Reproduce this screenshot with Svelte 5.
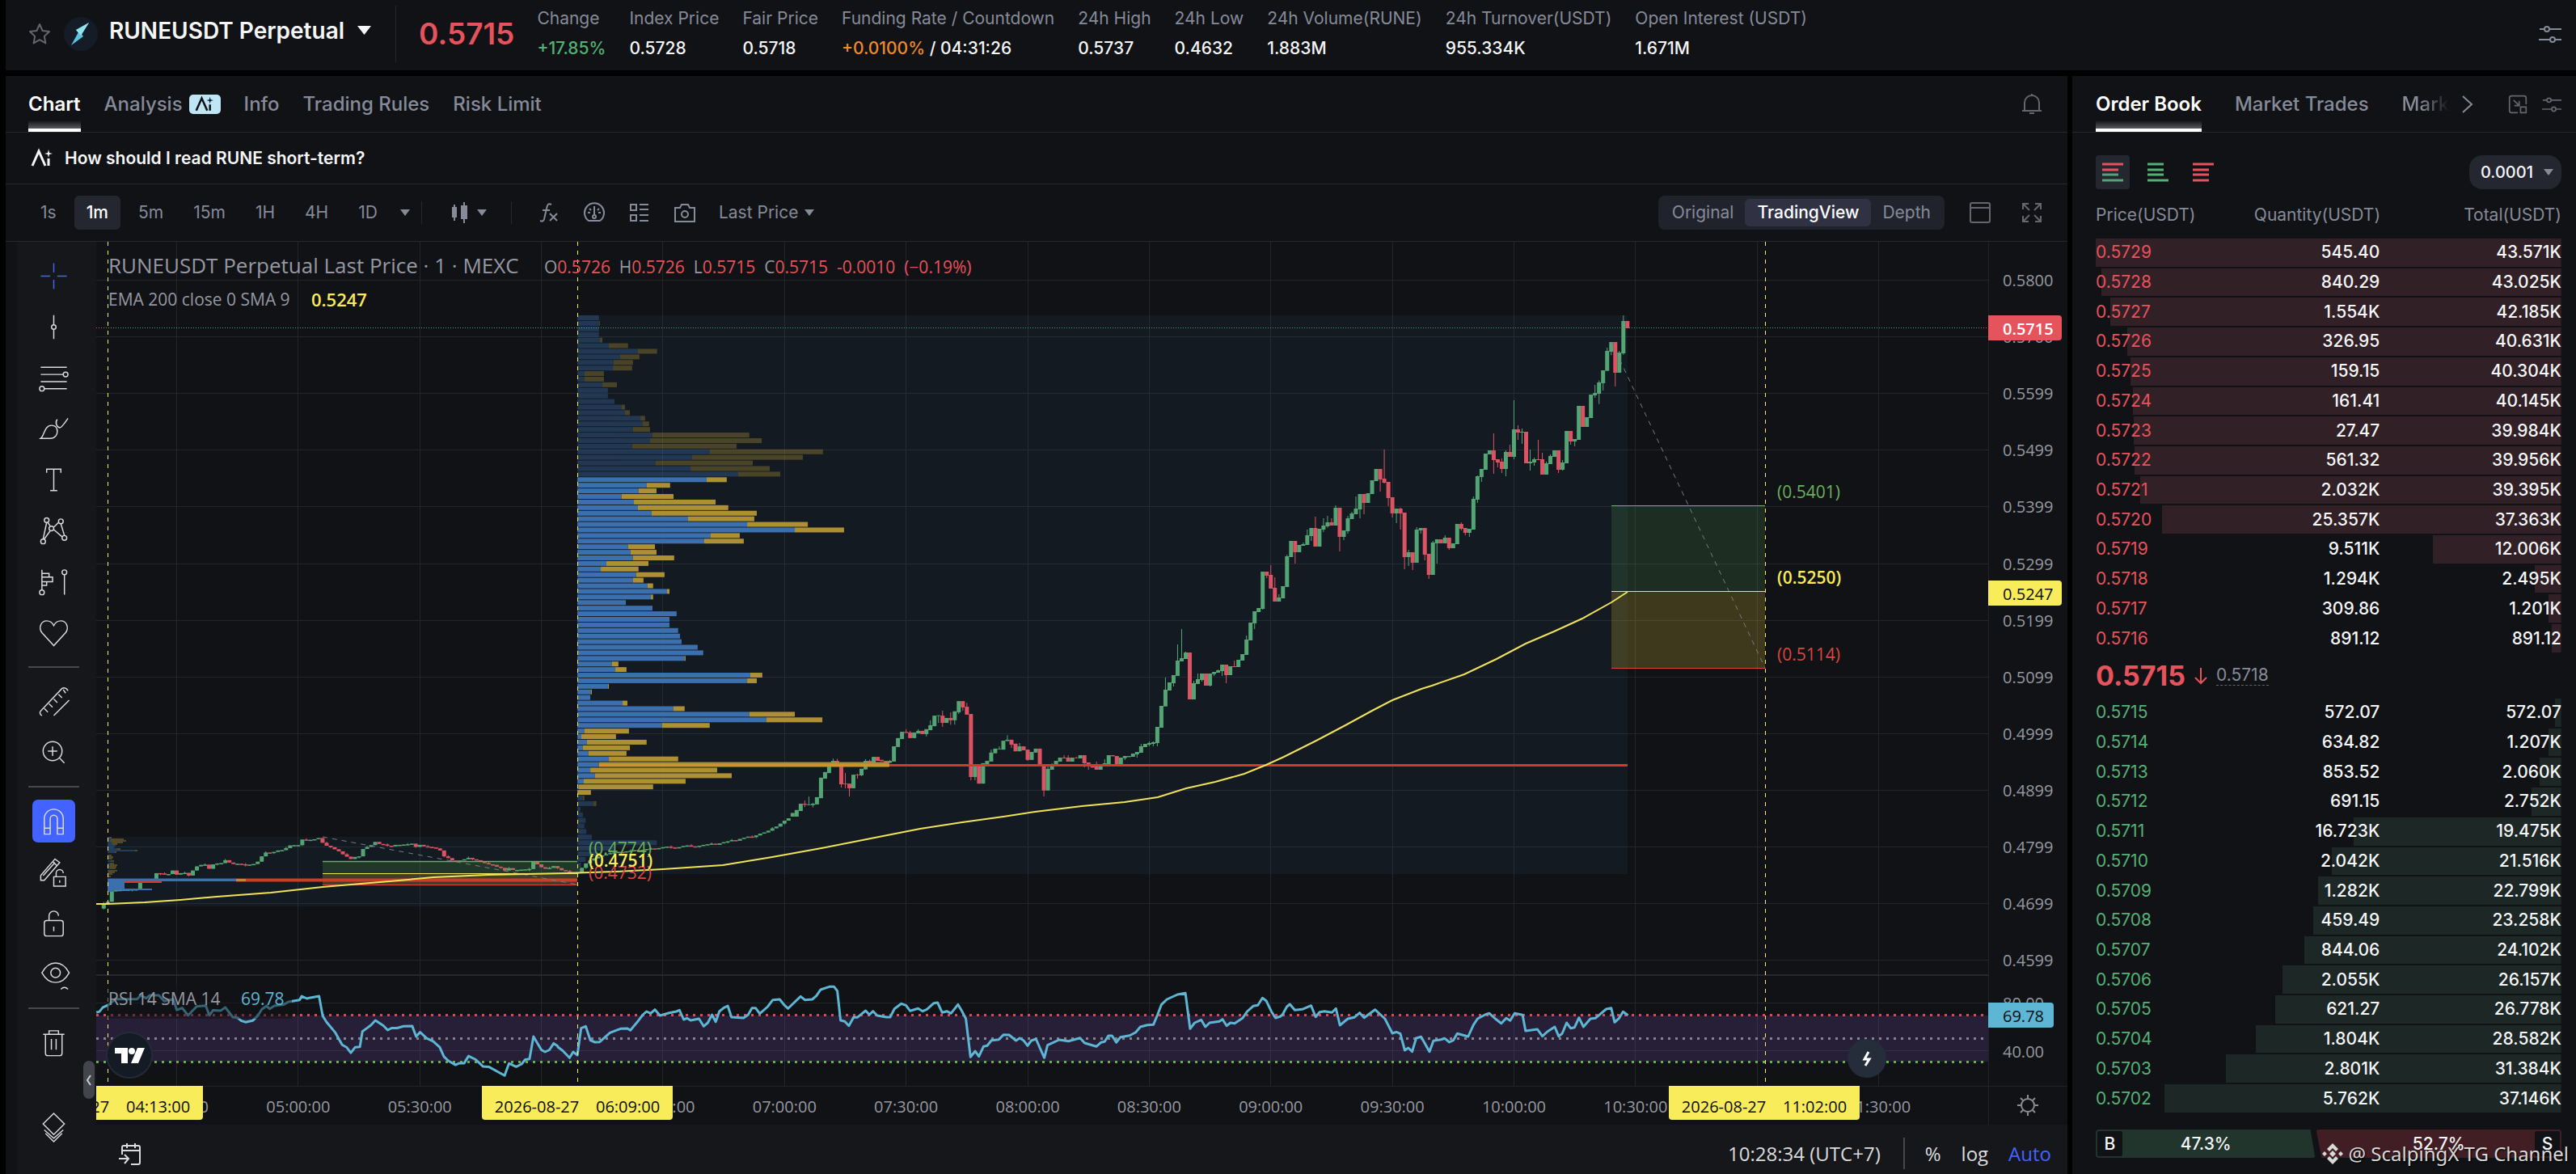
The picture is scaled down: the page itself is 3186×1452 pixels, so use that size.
<script lang="ts">
  type Candle = { x: number; top: number; bottom: number; high: number; low: number; up: boolean };

  const stats = [
    { label: "Change", value: "+17.85%", tone: "up" },
    { label: "Index Price", value: "0.5728", tone: "" },
    { label: "Fair Price", value: "0.5718", tone: "" },
    { label: "Funding Rate / Countdown", value: "+0.0100%", tone: "warn", extra: " / 04:31:26" },
    { label: "24h High", value: "0.5737", tone: "" },
    { label: "24h Low", value: "0.4632", tone: "" },
    { label: "24h Volume(RUNE)", value: "1.883M", tone: "" },
    { label: "24h Turnover(USDT)", value: "955.334K", tone: "" },
    { label: "Open Interest (USDT)", value: "1.671M", tone: "" }
  ];

  const intervals = ["1s", "1m", "5m", "15m", "1H", "4H", "1D"];
  const views = ["Original", "TradingView", "Depth"];
  let activeInterval = $state("1m");
  let activeView = $state("TradingView");
  let bookMode = $state("both");
  let tick = $state("0.0001");

  const asks = [
    ["0.5729", "545.40", "43.571K"],
    ["0.5728", "840.29", "43.025K"],
    ["0.5727", "1.554K", "42.185K"],
    ["0.5726", "326.95", "40.631K"],
    ["0.5725", "159.15", "40.304K"],
    ["0.5724", "161.41", "40.145K"],
    ["0.5723", "27.47", "39.984K"],
    ["0.5722", "561.32", "39.956K"],
    ["0.5721", "2.032K", "39.395K"],
    ["0.5720", "25.357K", "37.363K"],
    ["0.5719", "9.511K", "12.006K"],
    ["0.5718", "1.294K", "2.495K"],
    ["0.5717", "309.86", "1.201K"],
    ["0.5716", "891.12", "891.12"]
  ];
  const bids = [
    ["0.5715", "572.07", "572.07"],
    ["0.5714", "634.82", "1.207K"],
    ["0.5713", "853.52", "2.060K"],
    ["0.5712", "691.15", "2.752K"],
    ["0.5711", "16.723K", "19.475K"],
    ["0.5710", "2.042K", "21.516K"],
    ["0.5709", "1.282K", "22.799K"],
    ["0.5708", "459.49", "23.258K"],
    ["0.5707", "844.06", "24.102K"],
    ["0.5706", "2.055K", "26.157K"],
    ["0.5705", "621.27", "26.778K"],
    ["0.5704", "1.804K", "28.582K"],
    ["0.5703", "2.801K", "31.384K"],
    ["0.5702", "5.762K", "37.146K"]
  ];

  function depth(total: string) {
    const n = total.endsWith("K") ? parseFloat(total) : parseFloat(total) / 1000;
    return ((n / 43.571) * 100).toFixed(1) + "%";
  }

  // time axis: minutes counted from 04:30
  const tx = (min: number) => 218.5 + min * 5.012;
  const gridX = Array.from({ length: 15 }, (_, k) => tx(k * 30));
  const timeLabels = gridX.map((x, k) => {
    const m = 270 + k * 30;
    return { x, text: `${String(Math.floor(m / 60)).padStart(2, "0")}:${m % 60 === 0 ? "00" : "30"}:00` };
  });
  const priceLabels = ["0.5800", "0.5700", "0.5599", "0.5499", "0.5399", "0.5299", "0.5199", "0.5099", "0.4999", "0.4899", "0.4799", "0.4699", "0.4599"];
  const gridY = priceLabels.map((text, k) => ({ text, y: Math.round(346 + k * 70.12) }));

  // closes from 04:11 up to 07:01, one per minute
  const closes = [
    668, 650, 645, 607, 606, 605, 604, 604, 603, 603, 574, 573, 572, 572, 548, 549, 551, 551, 539, 553, 548, 547, 556,
    539, 525, 520, 519, 533, 518, 515, 514, 504, 512, 517, 516, 518, 521, 519, 517, 509, 491, 478, 480, 476, 471, 470,
    463, 454, 453, 453, 434, 437, 435, 433, 429, 445, 455, 460, 467, 474, 484, 492, 500, 493, 491, 466, 459, 453, 442,
    449, 451, 455, 457, 452, 452, 451, 450, 448, 459, 452, 457, 459, 461, 464, 471, 491, 497, 505, 507, 505, 501, 496,
    501, 504, 510, 514, 518, 520, 526, 530, 539, 531, 537, 537, 536, 535, 534, 509, 518, 528, 533, 530, 524, 531, 538,
    541, 545, 548, 545, 530, 515, 505, 498, 492, 488, 484, 480, 478, 476, 478, 474, 472, 470, 473, 469, 466, 464, 467,
    463, 460, 458, 461, 464, 460, 456, 454, 457, 459, 455, 452, 450, 448, 452, 447, 443, 440, 436, 438, 432, 428, 424,
    426, 420, 414, 410, 404, 396, 390, 380, 370, 362
  ];

  // [direction, body top, body bottom, high, low]; 0 = no wick on that side
  const rally = [
    [1, 1557, 1568, 0, 0], [1, 1548, 1568, 0, 0], [1, 1529, 1551, 0, 0], [-1, 1529, 1532, 1519, 1539],
    [1, 1531, 1533, 1507, 0], [1, 1529, 1533, 1526, 1540], [1, 1509, 1531, 0, 0], [1, 1450, 1512, 0, 0],
    [1, 1433, 1453, 0, 0], [1, 1405, 1436, 0, 0], [1, 1399, 1407, 1392, 0], [-1, 1399, 1407, 1393, 0],
    [-1, 1405, 1470, 0, 1480], [-1, 1468, 1470, 1436, 1482], [-1, 1468, 1482, 0, 1507], [1, 1441, 1482, 0, 0],
    [-1, 1441, 1443, 1438, 1453], [1, 1423, 1443, 0, 1445], [1, 1399, 1425, 1394, 0], [-1, 1399, 1407, 1395, 0],
    [1, 1387, 1408, 0, 0], [-1, 1387, 1399, 0, 0], [-1, 1396, 1400, 0, 0], [-1, 1399, 1405, 0, 0],
    [1, 1399, 1405, 1396, 0], [1, 1355, 1401, 0, 0], [1, 1330, 1357, 0, 0], [1, 1311, 1333, 0, 0],
    [-1, 1311, 1314, 1303, 0], [-1, 1313, 1330, 1308, 0], [1, 1313, 1330, 0, 0], [1, 1308, 1316, 1303, 0],
    [-1, 1308, 1318, 0, 0], [1, 1303, 1318, 0, 1325], [1, 1291, 1306, 1276, 0], [1, 1262, 1294, 0, 0],
    [1, 1261, 1263, 0, 1284], [-1, 1262, 1284, 1247, 1296], [1, 1269, 1284, 0, 0], [-1, 1269, 1276, 1252, 1290],
    [1, 1249, 1276, 0, 1289], [1, 1218, 1252, 0, 1257], [-1, 1218, 1237, 0, 1247], [-1, 1235, 1259, 1223, 0],
    [-1, 1257, 1448, 0, 1458], [1, 1414, 1448, 0, 1458], [-1, 1414, 1468, 0, 0], [1, 1406, 1468, 0, 0],
    [1, 1399, 1409, 0, 0], [1, 1374, 1401, 1365, 0], [1, 1362, 1376, 0, 0], [1, 1362, 1364, 1355, 0],
    [1, 1338, 1365, 0, 0], [1, 1335, 1339, 1321, 0], [-1, 1335, 1350, 0, 1360], [-1, 1347, 1370, 0, 0],
    [1, 1355, 1370, 1345, 0], [-1, 1355, 1367, 0, 0], [-1, 1365, 1396, 0, 1399], [1, 1372, 1396, 0, 0],
    [1, 1362, 1374, 0, 0], [-1, 1362, 1412, 0, 0]
  ];

  const breakout = [
    [-1, 1398, 1493, 0, 1515], [1, 1413, 1493, 1403, 0], [1, 1400, 1416, 1392, 0], [1, 1383, 1401, 0, 0],
    [1, 1371, 1386, 0, 0], [-1, 1371, 1374, 1362, 0], [-1, 1371, 1386, 1362, 0], [1, 1371, 1386, 0, 0],
    [-1, 1371, 1373, 1368, 0], [1, 1362, 1374, 0, 0], [-1, 1362, 1392, 0, 1407], [-1, 1389, 1400, 0, 1416],
    [-1, 1401, 1408, 0, 0], [-1, 1401, 1416, 1386, 0], [1, 1401, 1416, 0, 0], [1, 1392, 1401, 1377, 0],
    [1, 1362, 1395, 0, 0], [-1, 1362, 1366, 0, 0], [-1, 1365, 1398, 0, 0], [1, 1371, 1398, 0, 0],
    [1, 1365, 1373, 0, 1380], [1, 1365, 1369, 0, 0], [1, 1356, 1368, 0, 0], [1, 1350, 1359, 0, 1371],
    [1, 1329, 1353, 1320, 0], [1, 1320, 1332, 0, 0], [1, 1317, 1323, 1311, 1329], [1, 1314, 1320, 1311, 1329],
    [1, 1257, 1317, 0, 1329], [1, 1179, 1260, 0, 0], [1, 1119, 1181, 1074, 0], [1, 1092, 1122, 0, 0],
    [1, 1065, 1095, 0, 1107], [1, 1011, 1068, 951, 0], [1, 1002, 1014, 894, 0], [1, 981, 1005, 978, 0],
    [-1, 981, 1155, 0, 0], [1, 1095, 1155, 1086, 0], [1, 1080, 1098, 1059, 0], [1, 1059, 1083, 0, 1089],
    [-1, 1059, 1104, 0, 0], [1, 1059, 1104, 0, 1107], [1, 1053, 1061, 0, 1068], [1, 1047, 1056, 1044, 0],
    [1, 1026, 1050, 0, 1068], [-1, 1026, 1065, 0, 1095], [1, 1032, 1065, 0, 0], [-1, 1032, 1035, 1011, 0],
    [1, 1008, 1035, 0, 0], [1, 987, 1011, 0, 0], [1, 933, 990, 918, 0], [1, 870, 936, 0, 0],
    [1, 828, 873, 0, 894], [1, 816, 831, 0, 0], [1, 681, 819, 0, 822], [-1, 681, 696, 0, 705],
    [-1, 693, 744, 657, 0], [-1, 741, 792, 702, 0], [1, 777, 792, 765, 0], [1, 735, 780, 0, 0],
    [1, 624, 738, 618, 0], [1, 567, 627, 0, 0], [-1, 567, 609, 0, 651], [1, 582, 609, 0, 0],
    [1, 579, 585, 573, 0], [1, 546, 582, 525, 0], [1, 519, 549, 0, 567], [-1, 519, 588, 477, 0],
    [1, 522, 588, 0, 0], [1, 510, 525, 483, 534], [1, 498, 513, 474, 518], [-1, 498, 510, 483, 0],
    [1, 444, 510, 435, 0], [-1, 444, 552, 0, 606], [1, 528, 552, 0, 564], [1, 483, 531, 474, 540],
    [1, 465, 486, 459, 0], [1, 447, 468, 402, 0], [1, 393, 450, 0, 483], [-1, 393, 426, 0, 468],
    [1, 390, 426, 0, 0], [1, 342, 393, 0, 0], [1, 300, 345, 0, 0], [-1, 300, 339, 0, 384],
    [-1, 336, 351, 228, 354], [-1, 348, 408, 0, 438], [-1, 405, 465, 0, 480], [1, 447, 465, 0, 501],
    [-1, 447, 465, 444, 525], [-1, 462, 627, 0, 672], [1, 609, 627, 600, 660], [-1, 609, 648, 0, 675],
    [1, 525, 648, 516, 0], [1, 519, 528, 0, 540], [-1, 519, 618, 0, 639], [-1, 615, 693, 0, 708],
    [1, 573, 693, 567, 0], [1, 561, 576, 0, 651], [-1, 561, 576, 0, 0], [1, 555, 576, 546, 0],
    [-1, 555, 594, 0, 600], [1, 576, 594, 0, 0], [1, 504, 579, 0, 0], [-1, 504, 522, 498, 528],
    [-1, 519, 537, 0, 546], [1, 522, 537, 0, 552], [1, 411, 525, 402, 0], [1, 327, 414, 324, 426],
    [1, 300, 330, 0, 348], [1, 243, 303, 0, 0], [1, 231, 246, 0, 0], [-1, 231, 267, 168, 318],
    [-1, 264, 276, 0, 294], [-1, 273, 300, 261, 315], [1, 237, 300, 231, 327], [-1, 237, 255, 210, 0],
    [1, 153, 255, 45, 264], [-1, 153, 165, 138, 192], [1, 162, 165, 150, 207], [-1, 162, 279, 0, 0],
    [1, 273, 279, 228, 306], [1, 264, 276, 258, 288], [-1, 264, 267, 192, 0], [-1, 264, 321, 240, 0],
    [1, 279, 321, 273, 0], [1, 252, 282, 246, 0], [1, 231, 255, 0, 0], [-1, 231, 303, 0, 315],
    [1, 276, 303, 267, 306], [1, 159, 279, 0, 0], [-1, 159, 198, 0, 210], [1, 189, 198, 0, 216],
    [1, 66, 192, 0, 0], [-1, 66, 144, 0, 0], [1, 108, 144, 0, 0], [1, 24, 111, 0, 0],
    [1, 18, 27, -12, 36], [1, -21, 21, -28, 59], [1, -66, -18, 0, 9], [1, -138, -64, -150, 0],
    [1, -171, -135, 0, -122], [-1, -171, -57, 0, -6], [1, -132, -57, -138, 0], [1, -249, -129, -270, -124],
    [-1, -249, -222, 0, 0]
  ];

  function toCandles(rows: number[][], start: number, base: number, scale: number): Candle[] {
    return rows.map(([dir, top, bottom, high, low], k) => ({
      x: tx(start + k),
      top: base + top / scale,
      bottom: base + bottom / scale,
      high: base + (high && high < top ? high : top) / scale,
      low: base + (low && low > bottom ? low : bottom) / scale,
      up: dir > 0
    }));
  }

  const opening = closes.slice(1).map((c, k) => {
    const o = closes[k];
    const wick = k % 5 === 0 ? 4 : 0;
    const top = Math.min(o, c);
    const bottom = Math.max(o, c, top + 4);
    return [c <= o ? 1 : -1, top, bottom, top - wick, bottom + (k % 7 === 0 ? 3 : 0)];
  });

  const candles = [
    ...toCandles(opening, -18, 880, 2.741),
    ...toCandles(rally, 152, 370, 2.45),
    ...toCandles(breakout, 214, 480, 3)
  ];

  // volume profile, one row per price bucket: [end of up volume, end of down volume]
  const profile = [
    [133], [133, 136], [133], [133], [136, 144], [165, 227], [259, 321], [201, 264], [180, 243], [178, 240],
    [86, 149], [86, 149], [144, 191], [162], [162], [183], [206, 217], [217, 233], [267, 282], [274, 295],
    [243, 298], [306, 619], [298, 659], [240, 578], [491, 857], [434, 792], [316, 630], [429, 685], [583, 719],
    [481, 546], [287, 363], [261, 319], [206, 374], [246, 510], [259, 551], [303, 643], [421, 635], [612, 808],
    [766, 925], [494, 588], [473, 601], [227, 314], [235, 319], [243, 376], [157, 293], [139, 261], [253, 345],
    [243, 277], [290, 308], [353, 361], [301, 308], [220], [306], [384], [361], [361], [389], [395], [400],
    [452], [470], [410, 413], [175, 196], [186, 222], [622, 661], [612, 643], [162, 165], [107, 110], [105],
    [209, 225], [374, 410], [619, 766], [674, 855], [337, 491], [86, 230], [76, 188], [94, 287], [81, 233],
    [99, 222], [165, 389], [133, 1071], [105, 515], [120, 562], [84, 413], [68, 308], [63, 107], [81, 86],
    [115, 125], [73], [81], [90], [86], [92], [110], [320], [180], [130], [90], [75], [70]
  ].map(([up, down], k) => ({
    y: 390 + k * 6.907,
    up: (up - 63) / 2.613,
    down: down ? (down - up) / 2.613 : 0,
    inArea: k >= 29 && k <= 85
  }));

  const smallProfile = [
    [1035, 2, 3], [1037, 4, 16], [1039, 3, 20], [1041, 5, 14], [1043, 6, 6], [1045, 10, 0], [1047, 8, 0], [1049, 12, 4],
    [1051, 34, 3], [1053, 9, 2], [1057, 2, 3], [1059, 2, 5], [1061, 2, 4], [1064, 4, 4], [1067, 3, 5], [1069, 3, 9],
    [1071, 2, 9], [1073, 3, 7], [1076, 1, 11], [1078, 1, 8], [1080, 0, 6], [1083, 1, 3]
  ];

  function trace(raw: string, x0: number, y0: number, sx: number, sy: number) {
    return raw.trim().split(/\s+/).map((p) => {
      const [x, y] = p.split(",").map(Number);
      return `${(x0 + x / sx).toFixed(1)},${(y0 + y / sy).toFixed(1)}`;
    }).join(" ");
  }

  const ema = "119,1118 133,1118 179,1116 223,1113 268,1109 335,1104 399,1097 446,1093 482,1090 536,1085 603,1082 700,1080 760,1078 820,1075 894,1070 955,1060 1016,1049 1077,1037 1138,1025 1190,1017 1241,1010 1280,1004 1338,997 1391,992 1432,986 1467,975 1503,967 1539,957 1566,946 1588,936 1628,916 1664,897 1697,879 1722,866 1758,852 1771,848 1811,834 1851,815 1887,796 1922,781 1957,765 1993,745 2013,732";

  const rsi = [
    trace("267,1020 275,1018 285,1003 300,995 320,975 380,975 390,962 405,972 415,962 440,962 455,982 480,975 490,1012 505,1005 521,1030 545,1000 570,997 580,1030 590,1013 612,1014 624,1003 645,1036 658,1038 668,1048 680,1053 700,1048 715,1030 725,1010 738,998 747,1008 760,998 785,994 800,984 830,978 836,965 850,973 860,970 884,965 894,1032 905,1053 928,1087 948,1130 960,1138 972,1157 984,1138 997,1137 1004,1085 1018,1072 1028,1063 1040,1047 1062,1065 1074,1080 1085,1073 1100,1073 1118,1067 1142,1066 1153,1102 1164,1087 1182,1108 1200,1118 1218,1138 1230,1170 1242,1184 1262,1198 1272,1192 1286,1192 1298,1168 1318,1180 1338,1203 1355,1205 1398,1234 1410,1193 1430,1204 1445,1195 1455,1180 1467,1178 1478,1102 1500,1147 1510,1154 1522,1147 1534,1125 1545,1134", 0, 880, 2.24, 2.741),
    trace("0,345 10,358 25,385 33,363 42,375 50,275 60,268 70,320 80,327 90,326 112,292 135,277 150,276 156,283 173,248 183,225 191,213 200,220 209,206 220,228 240,218 255,213 262,208 271,243 278,238 286,246 304,240 314,268 323,255 332,225 340,251 348,212 357,200 366,192 374,234 400,237 410,225 418,200 426,200 435,221 452,195 463,170 478,168 487,188 496,202 513,173 523,157 532,170 548,168 557,155 566,132 585,121 595,121 602,137 609,246 618,250 627,266 637,235 645,235 663,210 671,225 679,212 688,228 708,234 716,234 725,203 740,184 750,190 759,211 776,202 786,212 795,205 810,182 818,180 828,217 838,212 847,220 862,187 870,210 879,240 889,382 899,360 907,380 917,343 925,340 934,320 950,317 960,299 972,300 987,321 995,312 1003,320 1012,340 1020,321 1030,315 1048,385 1055,338 1080,318 1100,323 1125,311 1135,330 1160,343 1170,328 1178,325 1186,303 1194,303 1203,328 1212,308 1232,302 1245,290 1255,270 1270,263 1283,262 1292,225 1300,188 1312,168 1335,150 1352,145 1362,277 1372,255 1386,244 1395,270 1404,255 1425,250 1432,242 1441,266 1449,255 1458,257 1475,238 1485,213 1498,193 1508,190 1518,163 1526,173 1537,212 1546,237 1556,232", 690, 1180, 1.742, 3),
    trace("10,225 19,195 25,186 35,208 50,205 68,191 77,233 85,215 95,212 110,217 118,202 126,264 142,240 155,235 166,218 175,236 197,206 217,240 232,294 240,289 248,295 257,357 264,348 272,362 280,312 290,307 307,362 315,322 330,317 338,313 347,327 355,320 363,295 385,306 396,262 404,240 420,224 428,220 440,240 452,257 462,238 470,247 479,220 495,226 501,285 525,279 535,305 545,288 560,270 568,305 575,295 584,255 592,275 600,272 609,236 618,270 632,240 642,238 664,204 674,200 681,253 690,238 698,214 708,227", 1580, 1180, 1.633, 3)
  ].join(" ");

  const dateTags = [
    { x: 133, text: "2026-08-27\u00a0\u00a0\u00a0\u00a004:13:00" },
    { x: 714, text: "2026-08-27\u00a0\u00a0\u00a0\u00a006:09:00" },
    { x: 2182, text: "2026-08-27\u00a0\u00a0\u00a0\u00a011:02:00" }
  ];
</script>

{#snippet caret()}
  <svg class="caret" viewBox="0 0 12 10"><path d="M0 1h12L6 9z" fill="currentColor" /></svg>
{/snippet}

{#snippet sliders()}
  <svg class="icon" viewBox="0 0 28 28" fill="none" stroke="currentColor" stroke-width="2">
    <path d="M1 8h6M13 8h15M0 21h14M20 21h8" /><circle cx="10" cy="8" r="3" /><circle cx="17" cy="21" r="3" />
  </svg>
{/snippet}

{#snippet aiMark()}
  <path d="M2 21L10 3l8 18M22 12v9" fill="none" stroke="currentColor" stroke-width="3" />
  <path d="M22 1l1 4 4 1-4 1-1 4-1-4-4-1 4-1z" fill="currentColor" />
{/snippet}

<div class="app">
  <header class="ticker">
    <button class="ghost" aria-label="Favourite">
      <svg class="icon dim" viewBox="0 0 28 28" fill="none" stroke="currentColor" stroke-width="2"><path d="M14 2l3.6 8 8.4 1-6.200 5.900 1.600 8.500L14 21.200 6.600 25.400l1.600-8.500L2 11l8.400-1z" stroke-linejoin="round" /></svg>
    </button>
    <svg class="coin" viewBox="0 0 42 42"><circle cx="21" cy="21" r="21" fill="#141d27" /><path d="M31 7L15 16l6 7zM9 35l15-11-5-7z" fill="#5cc3dd" /><path d="M15 16l6 7L31 7z" fill="#8fe3ec" /></svg>
    <button class="symbol">RUNEUSDT Perpetual <svg class="big-caret" viewBox="0 0 17 11"><path d="M0 0h17L8.500 11z" fill="currentColor" /></svg></button>
    <strong class="last">0.5715</strong>
    <dl class="stats">
      {#each stats as s (s.label)}
        <div>
          <dt>{s.label}</dt>
          <dd><span class={s.tone}>{s.value}</span>{s.extra ?? ""}</dd>
        </div>
      {/each}
    </dl>
    <button class="ghost settings" aria-label="Layout settings">{@render sliders()}</button>
  </header>

  <main>
    <section class="chart-panel">
      <nav class="tabs">
        <a href="#chart" class="tab active">Chart</a>
        <a href="#analysis" class="tab">Analysis <svg class="badge" viewBox="0 0 39 24"><rect width="39" height="24" rx="5" fill="#bfe6f5" /><g transform="translate(7 2) scale(.85)" color="#111215">{@render aiMark()}</g></svg></a>
        <a href="#info" class="tab">Info</a>
        <a href="#rules" class="tab">Trading Rules</a>
        <a href="#risk" class="tab">Risk Limit</a>
        <button class="ghost push" aria-label="Alerts">
          <svg class="icon dim" viewBox="0 0 28 28" fill="none" stroke="currentColor" stroke-width="2"><path d="M2 22h24M5 22V12a9 9 0 0 1 18 0v10M14 1v3M11 25h6" /></svg>
        </button>
      </nav>

      <button class="question">
        <svg class="icon" viewBox="0 0 28 24">{@render aiMark()}</svg>
        How should I read RUNE short-term?
      </button>

      <div class="toolbar">
        <div class="intervals">
          {#each intervals as i (i)}
            <button class={i === activeInterval ? "interval active" : "interval"} onclick={() => (activeInterval = i)}>{i}</button>
          {/each}
          <button class="ghost" aria-label="More intervals">{@render caret()}</button>
        </div>
        <div class="group">
          <button class="ghost pair" aria-label="Candle style">
            <svg class="icon" viewBox="0 0 28 28" fill="currentColor"><path d="M5 7h2V4h2v3h2v13H9v4H7v-4H5zM16 5h3V1h2v4h3v17h-3v5h-2v-5h-3z" /></svg>
            {@render caret()}
          </button>
        </div>
        <div class="group tools">
          <button class="ghost" aria-label="Indicators"><svg class="icon" viewBox="0 0 28 28" fill="none" stroke="currentColor" stroke-width="2"><path d="M17 4c-4-2-5 0-6 5L8 22c-1 3-2 3-5 2M6 11h9M15 15l9 9M24 15l-9 9" /></svg></button>
          <button class="ghost" aria-label="Speed"><svg class="icon" viewBox="0 0 28 28" fill="none" stroke="currentColor" stroke-width="2"><path d="M7 24a12 12 0 1 1 14 0zM14 6v4M6 14h3M19 14h3M8 9l2 2M20 9l-2 2M14 10v7" /><circle cx="14" cy="19" r="2" /></svg></button>
          <button class="ghost" aria-label="Layouts"><svg class="icon" viewBox="0 0 28 28" fill="none" stroke="currentColor" stroke-width="2"><path d="M3 4h7v7H3zM3 17h7v7H3zM14 4h11M14 10h11M14 17h11M14 24h11" /></svg></button>
          <button class="ghost" aria-label="Screenshot"><svg class="icon" viewBox="0 0 28 28" fill="none" stroke="currentColor" stroke-width="2"><path d="M2 8h6l2-4h8l2 4h6v17H2z" /><circle cx="14" cy="16" r="4" /></svg></button>
          <button class="ghost price-type">Last Price {@render caret()}</button>
        </div>
        <div class="segmented">
          {#each views as v (v)}
            <button class={v === activeView ? "view active" : "view"} onclick={() => (activeView = v)}>{v}</button>
          {/each}
        </div>
        <button class="ghost dim" aria-label="Window"><svg class="icon" viewBox="0 0 28 28" fill="none" stroke="currentColor" stroke-width="2"><rect x="2" y="2" width="24" height="24" rx="2" /><path d="M2 8h24" /></svg></button>
        <button class="ghost dim" aria-label="Full screen"><svg class="icon" viewBox="0 0 28 28" fill="none" stroke="currentColor" stroke-width="2"><path d="M3 10V3h7M18 3h7v7M25 18v7h-7M10 25H3v-7M3 3l8 8M25 3l-8 8M25 25l-8-8M3 25l8-8" /></svg></button>
      </div>

      <div class="tv">
        <aside class="drawing">
          <button class="tool blue" aria-label="Cross"><svg viewBox="0 0 28 28"><path d="M14 3v8M14 17v8M3 14h8M17 14h8" /></svg></button>
          <button class="tool" aria-label="Trend line"><svg viewBox="0 0 28 28"><path d="M14 4v8M14 16v8" /><circle cx="14" cy="14" r="1.900" /></svg></button>
          <button class="tool" aria-label="Fib retracement"><svg viewBox="0 0 28 28"><path d="M3 5h22M3 11h19M3 17h22M6 23h19" /><circle cx="24" cy="11" r="2" /><circle cx="4" cy="23" r="2" /></svg></button>
          <button class="tool" aria-label="Brush"><svg viewBox="0 0 28 28"><path d="M3 22c3-2 3-11 9-11 4 0 5 3 5 5 0 3-2 6-6 6zM17 6c-2 2-1 6 2 7 1 0 3-2 7-8" /></svg></button>
          <button class="tool" aria-label="Text"><svg viewBox="0 0 28 28"><path d="M8 8V5h12v3M14 5v18M11 23h6" /></svg></button>
          <button class="tool" aria-label="Patterns"><svg viewBox="0 0 28 28"><circle cx="8" cy="5" r="2" /><circle cx="20" cy="6" r="2" /><circle cx="12" cy="12" r="2" /><circle cx="5" cy="23" r="2" /><circle cx="23" cy="20" r="2" /><path d="M8 7L5 21M6 21l5-7M9 7l2 3M14 11l4-4M20 8l3 10M14 13l7 6" /></svg></button>
          <button class="tool" aria-label="Prediction"><svg viewBox="0 0 28 28"><path d="M4 4v17M4 7h6v3H4M4 10h9v4H4M4 14h4v3H4M23 8v17" /><circle cx="4" cy="23" r="2" /><circle cx="23" cy="6" r="2" /></svg></button>
          <button class="tool" aria-label="Favourites"><svg viewBox="0 0 28 28"><path d="M14 25L4 14c-3-4-1-10 4-10 3 0 5 2 6 4 1-2 3-4 6-4 5 0 7 6 4 10z" /></svg></button>
          <hr />
          <button class="tool" aria-label="Measure"><svg viewBox="0 0 28 28"><path d="M4 26c-2-1-2-3-1-4L21 3c2-1 4 0 5 2M14 26L27 13M6 20l3 3M10 16l3 3M14 12l3 3M18 8l3 3M22 4l2 3" /></svg></button>
          <button class="tool" aria-label="Zoom in"><svg viewBox="0 0 28 28"><circle cx="13" cy="13" r="8" /><path d="M9 13h8M13 9v8M19 19l4 4" /></svg></button>
          <hr />
          <button class="tool filled" aria-label="Magnet"><svg viewBox="0 0 28 28"><path d="M6 25V12a8 8 0 0 1 16 0v13h-5V12a3 3 0 0 0-6 0v13zM6 20h5M17 20h5" /></svg></button>
          <button class="tool" aria-label="Lock drawing mode"><svg viewBox="0 0 28 28"><path d="M3 21v-4L15 3l4 3-13 15zM13 5l4 4M5 17l10-11M14 18h10v8H14zM16 18v-3a3 3 0 0 1 6 0M19 21v2" /></svg></button>
          <button class="tool" aria-label="Lock all"><svg viewBox="0 0 28 28"><rect x="6" y="12" width="16" height="13" rx="2" /><path d="M10 12V8a4 4 0 0 1 8 0M14 17v4" /></svg></button>
          <button class="tool" aria-label="Hide all"><svg viewBox="0 0 28 28"><path d="M4 13c6-11 17-11 23 0-6 11-17 11-23 0z" /><circle cx="15.500" cy="13" r="4" /><path d="M20 27c2-2 4-2 6 0" /></svg></button>
          <hr />
          <button class="tool" aria-label="Remove"><svg viewBox="0 0 28 28"><path d="M5 7h18M10 7V4h8v3M7 7v16a2 2 0 0 0 2 2h10a2 2 0 0 0 2-2V7M12 11v9M16 11v9" /></svg></button>
          <button class="tool last-tool" aria-label="Object tree"><svg viewBox="0 0 28 28"><path d="M14 2l9 9-9 9-9-9zM6 16l8 7 8-7M7 19l7 7 7-7" /></svg></button>
          <button class="collapse" aria-label="Collapse"><svg viewBox="0 0 8 14"><path d="M6 1L2 7l4 6" fill="none" stroke="#c8ccd4" stroke-width="2" /></svg></button>
        </aside>

        <div class="plot-column">
          <svg class="plot" viewBox="119 299 2438 1092" role="img" aria-label="RUNEUSDT price chart">
            <defs>
              <clipPath id="pane"><rect x="119" y="299" width="2340" height="1044" /></clipPath>
            </defs>
            <g clip-path="url(#pane)">
              <g class="grid">
                {#each gridY as g (g.text)}<path d="M119 {g.y + 0.5}H2459" />{/each}
                <path d="M119 1240.500H2459M119 1299.500H2459" />
                {#each gridX as x (x)}<path d="M{Math.floor(x) + 0.5} 299V1343" />{/each}
              </g>
              <rect x="714" y="390" width="1299" height="691" fill="#2d6a9a" opacity=".09" />
              <rect x="133" y="1035" width="581" height="86" fill="#2d6a9a" opacity=".09" />

              {#each candles as c (c.x)}
                <g fill={c.up ? "#54a575" : "#dc5363"}>
                  <rect x={c.x - 2.5} y={c.top} width="5" height={c.bottom - c.top} />
                  <rect x={c.x - 0.5} y={c.high} width="1" height={c.low - c.high} />
                </g>
              {/each}

              {#each profile as p (p.y)}
                <g opacity={p.inArea ? 1 : 0.35}>
                  <rect x="714" y={p.y} width={p.up} height="6" fill="#3b6fae" />
                  <rect x={714 + p.up} y={p.y} width={p.down} height="6" fill="#ae9034" />
                </g>
              {/each}
              <g opacity=".4">
                {#each smallProfile as [y, up, down] (y)}
                  <rect x="133" {y} width={up} height="2" fill="#3b6fae" />
                  <rect x={133 + up} {y} width={down} height="2" fill="#ae9034" />
                {/each}
              </g>

              <path d="M399 1065H714V1080H399z" fill="#5fae57" opacity=".2" />
              <path d="M399 1080H714V1095H399z" fill="#f5d63a" opacity=".2" />
              <path d="M399 1065.500H714" stroke="#68b05c" stroke-width="1.500" />
              <path d="M399 1094.500H714" stroke="#d9463f" />
              <path d="M292 1088.500H714M154 1090H200" stroke="#d33a22" stroke-width="4" />
              <path d="M133 1086.500H292V1090H154V1101H133zM154 1099H188V1101H154zM133 1101H140V1103H133z" fill="#3b6fae" />
              <path d="M292 1087h12v3h-12z" fill="#ae9034" />
              <path d="M1100 946.500H2013" stroke="#d33a22" stroke-width="3" />
              <path d="M741 946.500H1100" stroke="#dd8b2b" stroke-width="3" />

              <path d="M1993 625H2183V731H1993z" fill="#5fae57" opacity=".18" />
              <path d="M1993 731H2183V826H1993z" fill="#f5d63a" opacity=".2" />
              <path d="M1993 625.500H2183" stroke="#68b05c" />
              <path d="M1993 826.500H2183" stroke="#d9463f" />
              <path class="ray" d="M1993 423L2183 826M399 1035L714 1094" />
              <polyline points={ema} class="ema" />
              <path d="M1993 731.500H2183M399 1080.500H714" class="ema thin" />
              <path d="M119 405.500H2459" stroke="#e5535c" stroke-dasharray="1 2" />

              <rect x="119" y="1205" width="2340" height="2" fill="#26282e" />
              <rect x="119" y="1256" width="2340" height="57" fill="#7e57c2" opacity=".2" />
              <path class="dots" d="M119 1255.500H2459" stroke="#e0474e" />
              <path class="dots" d="M119 1284.500H2459" stroke="#85838e" />
              <path class="dots" d="M119 1313.500H2459" stroke="#6aab58" />
              <polyline points={rsi} fill="none" stroke="#5cb6d4" stroke-width="3" stroke-linejoin="round" />

              <path class="session" d="M133.500 299V1343M714.500 299V1343M2183.500 299V1343" />

              <g class="note" dominant-baseline="central">
                <text x="728" y="1049" fill="#68b05c">(0.4774)</text>
                <text x="728" y="1079" fill="#d9463f">(0.4732)</text>
                <text x="728" y="1064" fill="#f9ec5a" font-weight="600">(0.4751)</text>
                <text x="2198" y="608" fill="#68b05c">(0.5401)</text>
                <text x="2198" y="714" fill="#f9ec5a" font-weight="600">(0.5250)</text>
                <text x="2198" y="809" fill="#d9463f">(0.5114)</text>
              </g>

              <rect x="133" y="1218" width="228" height="42" fill="#111215" opacity=".5" />
              <g class="legend" dominant-baseline="central">
                <text x="134" y="328" class="title">RUNEUSDT Perpetual Last Price · 1 · MEXC</text>
                <text x="673" y="330" class="ohlc">O<tspan>0.5726</tspan>&nbsp; H<tspan>0.5726</tspan>&nbsp; L<tspan>0.5715</tspan>&nbsp; C<tspan>0.5715</tspan>&nbsp; <tspan>-0.0010</tspan>&nbsp; <tspan>(−0.19%)</tspan></text>
                <text x="134" y="370">EMA 200 close 0 SMA 9</text>
                <text x="385" y="370" class="reading" fill="#f9ec5a">0.5247</text>
                <text x="134" y="1235">RSI 14 SMA 14</text>
                <text x="298" y="1235" fill="#5cb6d4">69.78</text>
              </g>

              <circle cx="160" cy="1305" r="28" fill="#141b24" stroke="#262a38" stroke-width="2" />
              <path d="M142 1296h16v19h-8v-12h-8zM170 1296h9l-8 19h-9z" fill="#fff" />
              <circle cx="163" cy="1300" r="4" fill="#fff" />
              <circle cx="2309" cy="1309" r="24" fill="#252d3a" />
              <path d="M2311 1301l-5 9h6l-5 8" fill="none" stroke="#fff" stroke-width="3" />
            </g>

            <path d="M119 1343.500H2557M2459.500 299V1391" stroke="#202227" />
            <g class="axis" dominant-baseline="central">
              {#each gridY as g (g.text)}<text x="2477" y={g.y}>{g.text}</text>{/each}
              <text x="2477" y="1240">80.00</text>
              <text x="2477" y="1300">40.00</text>
              <path d="M2459 390h87a4 4 0 0 1 4 4v23a4 4 0 0 1-4 4h-87z" fill="#e5535c" />
              <text x="2477" y="406" class="on-red">0.5715</text>
              <path d="M2459 718h87a4 4 0 0 1 4 4v23a4 4 0 0 1-4 4h-87z" fill="#f9ec5a" />
              <text x="2477" y="734" class="on-light">0.5247</text>
              <path d="M2459 1240h77a4 4 0 0 1 4 4v23a4 4 0 0 1-4 4h-77z" fill="#5cb6d4" />
              <text x="2477" y="1256" class="on-light">69.78</text>
              {#each timeLabels as t (t.x)}<text x={t.x} y="1368" text-anchor="middle">{t.text}</text>{/each}
              {#each dateTags as d (d.x)}
                <path d="M{d.x - 118} 1343h236v38a4 4 0 0 1-4 4h-228a4 4 0 0 1-4-4z" fill="#f9ec5a" />
                <text x={d.x} y="1368" text-anchor="middle" class="on-light">{d.text}</text>
              {/each}
            </g>
            <path d="M15 1343h104v48H15z" fill="#16171b" />
            <g fill="none" stroke="#8a8d94" stroke-width="2">
              <circle cx="2508" cy="1367" r="8" />
              <path d="M2508 1354v4M2508 1376v4M2495 1367h4M2517 1367h4M2499 1358l3 3M2514 1373l3 3M2517 1358l-3 3M2502 1373l-3 3" />
            </g>
          </svg>

          <footer class="chart-footer">
            <button class="ghost" aria-label="Go to date"><svg class="icon" viewBox="0 0 28 28" fill="none" stroke="#dbdbdb" stroke-width="2"><path d="M4 15V6a2 2 0 0 1 2-2h18a2 2 0 0 1 2 2v19a2 2 0 0 1-2 2h-9M4 10h22M10 1v6M20 1v6M0 20h11M7 15l5 5-5 6" /></svg></button>
            <button class="clock">10:28:34 (UTC+7)</button>
            <button>%</button>
            <button>log</button>
            <button class="auto">Auto</button>
          </footer>
        </div>
      </div>
    </section>

    <section class="book">
      <nav class="tabs">
        <a href="#book" class="tab active">Order Book</a>
        <a href="#trades" class="tab">Market Trades</a>
        <a href="#market" class="tab cut">Mark</a>
        <div class="book-actions">
          <button class="ghost" aria-label="More tabs"><svg class="chevron" viewBox="0 0 14 24"><path d="M1 2l11 10L1 22" fill="none" stroke="currentColor" stroke-width="2" /></svg></button>
          <button class="ghost dim push" aria-label="Pop out"><svg class="icon" viewBox="0 0 28 28" fill="none" stroke="currentColor" stroke-width="2"><path d="M14 26H5a3 3 0 0 1-3-3V5a3 3 0 0 1 3-3h18a3 3 0 0 1 3 3v9M8 8l8 8M16 9v7H9M18 18h8v8h-8z" /></svg></button>
          <button class="ghost dim" aria-label="Book settings">{@render sliders()}</button>
        </div>
      </nav>

      <div class="book-tools">
        <button class={bookMode === "both" ? "mode active" : "mode"} aria-label="Both sides" onclick={() => (bookMode = "both")}>
          <svg viewBox="0 0 26 24" stroke-width="3"><path d="M0 2h26M0 9h20" stroke="#e5535c" /><path d="M0 15h20M0 22h26" stroke="#54a575" /></svg>
        </button>
        <button class={bookMode === "bids" ? "mode active" : "mode"} aria-label="Bids" onclick={() => (bookMode = "bids")}>
          <svg viewBox="0 0 26 24" stroke-width="3" stroke="#54b175"><path d="M0 2h20M0 9h20M0 15h20M0 22h26" /></svg>
        </button>
        <button class={bookMode === "asks" ? "mode active" : "mode"} aria-label="Asks" onclick={() => (bookMode = "asks")}>
          <svg viewBox="0 0 26 24" stroke-width="3" stroke="#e5535c"><path d="M0 2h26M0 9h20M0 15h20M0 22h20" /></svg>
        </button>
        <label class="tick">
          <select bind:value={tick} aria-label="Price grouping">
            <option>0.0001</option>
            <option>0.001</option>
          </select>
          {@render caret()}
        </label>
      </div>

      <table class="asks">
        <thead>
          <tr><th>Price(USDT)</th><th>Quantity(USDT)</th><th>Total(USDT)</th></tr>
        </thead>
        <tbody>
          {#each asks as [price, qty, total] (price)}
            <tr style="--depth: {depth(total)}"><td>{price}</td><td>{qty}</td><td>{total}</td></tr>
          {/each}
        </tbody>
      </table>
      <div class="mid">
        <strong>0.5715</strong>
        <svg viewBox="0 0 16 22" fill="none" stroke="currentColor" stroke-width="2"><path d="M8 1v19M1 13l7 7 7-7" /></svg>
        <span>0.5718</span>
      </div>
      <table class="bids">
        <tbody>
          {#each bids as [price, qty, total] (price)}
            <tr style="--depth: {depth(total)}"><td>{price}</td><td>{qty}</td><td>{total}</td></tr>
          {/each}
        </tbody>
      </table>

      <div class="ratio">
        <div class="buy" style="flex-grow: 47.3"><b>B</b><span>47.3%</span></div>
        <div class="sell" style="flex-grow: 52.7"><span>52.7%</span><b>S</b></div>
      </div>
      <p class="credit">
        <svg viewBox="0 0 26 26" fill="currentColor"><path d="M13 0l7 7-3 3-4-4-4 4-3-3zM13 26l7-7-3-3-4 4-4-4-3 3zM3 10l3 3-3 3-3-3zM23 10l3 3-3 3-3-3zM13 9l4 4-4 4-4-4z" /></svg>
        @ ScalpingX TG Channel
      </p>
    </section>
  </main>
</div>

<style>
  :global(body) {
    background: #000;
  }

  .app {
    min-height: 100vh;
    display: flex;
    flex-direction: column;
    gap: 7px;
    padding-left: 7px;
    box-sizing: border-box;
    font-family: Inter, "Liberation Sans", sans-serif;
    font-size: 21px;
    line-height: 24px;
    color: #f5f6f8;
  }

  button {
    background: none;
    border: none;
    padding: 0;
    font: inherit;
    color: inherit;
    cursor: pointer;
  }

  svg {
    display: block;
    flex: none;
  }

  .ghost {
    display: flex;
    align-items: center;
    color: #858b99;
  }

  .icon {
    width: 28px;
    height: 28px;
  }

  .dim {
    color: #63666e;
  }

  .caret {
    width: 12px;
    height: 10px;
  }

  .ticker {
    height: 87px;
    display: flex;
    align-items: center;
    padding: 0 18px 4px 28px;
    box-sizing: border-box;
    background: #111215;
  }

  .coin {
    width: 42px;
    height: 42px;
    margin: 0 14px 0 16px;
  }

  .symbol {
    display: flex;
    align-items: center;
    gap: 16px;
    height: 70px;
    padding: 0 30px 8px 0;
    box-sizing: border-box;
    border-right: 1px solid #26282e;
    font-size: 28px;
    font-weight: 600;
  }

  .big-caret {
    width: 17px;
    height: 11px;
  }

  .last {
    margin: 0 28px;
    font-size: 37px;
    font-weight: 600;
    color: #e5535c;
  }

  .stats {
    display: flex;
    gap: 29px;
    margin: 0;
  }

  dt {
    color: #858b99;
    margin-bottom: 13px;
  }

  dd {
    margin: 0;
    font-weight: 500;
    white-space: pre;
  }

  .up {
    color: #54b175;
  }

  .warn {
    color: #ee8a2a;
  }

  .settings {
    margin-left: auto;
  }

  main {
    flex: 1;
    display: grid;
    grid-template-columns: minmax(0, 1fr) 623px;
    gap: 6px;
  }

  .chart-panel,
  .book {
    background: #111215;
  }

  .chart-panel {
    display: flex;
    flex-direction: column;
  }

  .tabs {
    height: 69px;
    display: flex;
    align-items: center;
    gap: 29px;
    padding: 0 30px 0 28px;
    border-bottom: 1px solid #26282e;
    font-size: 24px;
    font-weight: 500;
    white-space: nowrap;
  }

  .tab {
    height: 69px;
    display: flex;
    align-items: center;
    gap: 8px;
    color: #858b99;
    text-decoration: none;
    box-sizing: border-box;
  }

  .tab.active {
    color: #fff;
    font-weight: 600;
    padding-top: 4px;
    border-bottom: 4px solid #fff;
    background: linear-gradient(to top, #5a5b5e, #111215 10px);
  }

  .badge {
    width: 39px;
    height: 24px;
  }

  .push {
    margin-left: auto;
  }

  .question {
    height: 64px;
    display: flex;
    align-items: center;
    gap: 14px;
    padding: 0 31px;
    border-bottom: 1px solid #26282e;
    font-weight: 600;
  }

  .toolbar {
    height: 70px;
    display: flex;
    align-items: center;
    gap: 36px;
    padding: 0 30px 0 28px;
    border-bottom: 1px solid #26282e;
    color: #858b99;
  }

  .intervals {
    display: flex;
    gap: 7px;
    margin-right: -22px;
  }

  .intervals .ghost {
    margin-left: 6px;
  }

  .interval {
    height: 42px;
    padding: 0 15px;
    border-radius: 6px;
  }

  .interval.active {
    background: #252730;
    color: #fff;
    font-weight: 500;
  }

  .group {
    display: flex;
    align-items: center;
    height: 28px;
    padding-left: 32px;
    border-left: 1px solid #26282e;
  }

  .intervals + .group {
    margin-right: -6px;
  }

  .pair,
  .price-type {
    gap: 8px;
  }

  .tools {
    gap: 28px;
  }

  .segmented {
    margin: 0 -6px 0 auto;
    display: flex;
    height: 42px;
    padding: 4px 3px;
    box-sizing: border-box;
    border-radius: 8px;
    background: #21232c;
  }

  .view {
    padding: 0 14px;
    border-radius: 6px;
  }

  .view.active {
    padding: 0 15px;
    background: #303244;
    color: #fff;
    font-weight: 500;
  }

  .tv {
    flex: 1;
    display: flex;
    padding-left: 14px;
  }

  .drawing {
    position: relative;
    width: 98px;
    padding: 16px 7px 31px 0;
    box-sizing: border-box;
    display: flex;
    flex-direction: column;
    align-items: center;
    gap: 10px;
    background: #16171b;
  }

  .drawing hr {
    width: 63px;
    height: 2px;
    margin: 5px 0;
    border: none;
    background: #46484d;
  }

  .tool {
    width: 53px;
    height: 53px;
    display: grid;
    place-items: center;
    border-radius: 7px;
    color: #dbdbdb;
  }

  .tool svg {
    width: 41px;
    height: 41px;
    fill: none;
    stroke: currentColor;
  }

  .tool.blue {
    color: #4263ff;
  }

  .tool.filled {
    background: #4263ff;
  }

  .last-tool {
    margin-top: auto;
  }

  .collapse {
    position: absolute;
    right: 2px;
    bottom: 93px;
    width: 14px;
    height: 47px;
    display: grid;
    place-items: center;
    border-radius: 7px;
    background: #42454c;
  }

  .collapse svg {
    width: 8px;
    height: 14px;
  }

  .plot-column {
    flex: 1;
    min-width: 0;
    display: flex;
    flex-direction: column;
    background: #16171b;
  }

  .plot {
    width: 100%;
    height: auto;
    background: #111215;
    font-family: "Open Sans", "Noto Sans", sans-serif;
    font-size: 20px;
  }

  .grid {
    stroke: #23252c;
    stroke-width: 1;
  }

  .ray {
    fill: none;
    stroke: #787b86;
    stroke-dasharray: 6 6;
  }

  .ema {
    fill: none;
    stroke: #f0e25a;
    stroke-width: 2;
  }

  .thin {
    stroke-width: 1;
  }

  .dots {
    stroke-width: 3;
    stroke-dasharray: 3 6;
  }

  .session {
    stroke: #f9ec5a;
    stroke-dasharray: 5 6;
  }

  .note {
    font-size: 21px;
  }

  .legend {
    font-size: 21px;
    fill: #9598a1;
  }

  .title {
    font-size: 26px;
  }

  .reading {
    font-size: 22px;
    font-weight: 600;
  }

  .ohlc tspan {
    fill: #e5535c;
  }

  .axis {
    fill: #9598a1;
  }

  .on-red {
    fill: #fff;
    font-weight: 600;
  }

  .on-light {
    fill: #0c0e12;
  }

  .chart-footer {
    height: 61px;
    flex: 1;
    display: flex;
    align-items: center;
    gap: 25px;
    padding: 10px 20px 0 28px;
    box-sizing: border-box;
    font-family: "Open Sans", "Noto Sans", sans-serif;
    font-size: 24px;
    color: #dbdbdb;
  }

  .clock {
    margin-left: auto;
    height: 39px;
    padding-right: 28px;
    border-right: 2px solid #46484d;
  }

  .auto {
    color: #4263ff;
  }

  .book {
    position: relative;
  }

  .book .tabs {
    gap: 41px;
    padding: 0 18px 0 29px;
  }

  .book-actions {
    flex: 1;
    display: flex;
    gap: 18px;
    margin-left: -25px;
  }

  .book-actions .icon {
    width: 24px;
    height: 24px;
  }

  .cut {
    background: linear-gradient(to right, #858b99 40%, #111215);
    background-clip: text;
    color: transparent;
  }

  .chevron {
    width: 14px;
    height: 24px;
  }

  .book-tools {
    display: flex;
    gap: 14px;
    padding: 28px 18px 10px 29px;
  }

  .mode {
    width: 42px;
    height: 42px;
    display: grid;
    place-items: center;
    border-radius: 4px;
  }

  .mode svg {
    width: 26px;
    height: 24px;
  }

  .mode.active {
    background: #252730;
  }

  .tick {
    margin-left: auto;
    display: flex;
    align-items: center;
    height: 42px;
    padding: 0 10px 0 14px;
    border-radius: 16px;
    background: #252730;
    color: #858b99;
  }

  select {
    width: 78px;
    appearance: none;
    background: none;
    border: none;
    padding: 0;
    font: inherit;
    font-size: 20px;
    font-weight: 500;
    color: #f5f6f8;
  }

  table {
    width: calc(100% - 47px);
    margin: 0 18px 0 29px;
    border-collapse: separate;
    border-spacing: 0 2px;
    table-layout: fixed;
  }

  th {
    height: 40px;
    padding: 0 0 7px;
    font-weight: 400;
    color: #858b99;
  }

  td {
    padding: 0;
  }

  th:nth-child(1),
  td:nth-child(1) {
    width: 34%;
    text-align: left;
  }

  th:nth-child(2),
  td:nth-child(2) {
    width: 27%;
  }

  th,
  td {
    text-align: right;
  }

  td {
    font-weight: 500;
  }

  td:first-child {
    font-weight: 400;
  }

  .asks {
    height: 565px;
  }

  .bids {
    height: 516px;
  }

  .asks td:first-child,
  .mid {
    color: #e5535c;
  }

  .bids td:first-child {
    color: #54b175;
  }

  .asks tbody tr {
    background: linear-gradient(to left, #312026 var(--depth), transparent 0);
  }

  .bids tbody tr {
    background: linear-gradient(to left, #1d2726 var(--depth), transparent 0);
  }

  .mid {
    display: flex;
    align-items: center;
    gap: 11px;
    height: 53px;
    padding-left: 29px;
  }

  .mid strong {
    font-size: 34px;
    font-weight: 700;
  }

  .mid svg {
    width: 16px;
    height: 22px;
  }

  .mid span {
    color: #858b99;
    border-bottom: 1px dashed #63666e;
  }

  .ratio {
    display: flex;
    margin: 19px 18px 0 29px;
    font-weight: 500;
  }

  .buy,
  .sell {
    flex-basis: 0;
    position: relative;
    height: 35px;
    display: flex;
    align-items: center;
    justify-content: center;
    border-radius: 4px;
  }

  .buy {
    background: #21352c;
    clip-path: polygon(0 0, calc(100% - 7px) 0, calc(100% - 1px) 100%, 0 100%);
  }

  .sell {
    background: #411e24;
    clip-path: polygon(0 0, 100% 0, 100% 100%, 7px 100%);
  }

  .ratio b {
    position: absolute;
    left: 2px;
    top: 2px;
    width: 31px;
    line-height: 31px;
    text-align: center;
    background: #111215;
    border-radius: 2px;
    font-weight: 500;
  }

  .sell b {
    left: auto;
    right: 2px;
  }

  .credit {
    position: absolute;
    right: 9px;
    bottom: 9px;
    margin: 0;
    display: flex;
    align-items: center;
    gap: 7px;
    font-family: "Noto Sans", sans-serif;
    font-size: 24px;
    line-height: 32px;
    color: #d8d8d8;
    text-shadow: 1px 1px 2px #000;
  }

  .credit svg {
    width: 26px;
    height: 26px;
  }
</style>
